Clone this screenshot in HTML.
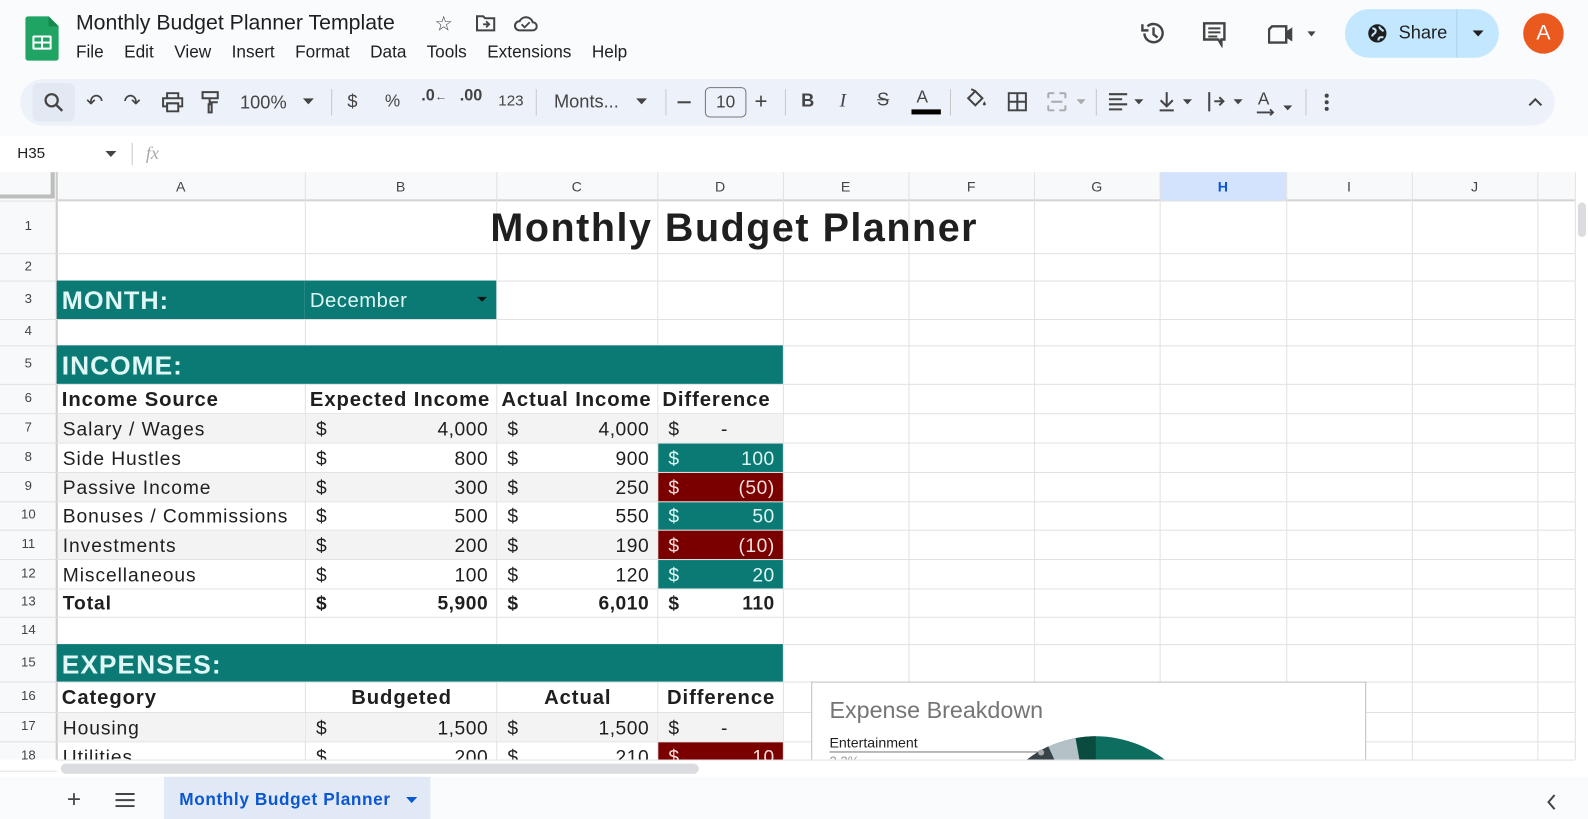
<!DOCTYPE html>
<html style="overflow:hidden"><head><meta charset="utf-8"><style>
*{box-sizing:border-box;margin:0;padding:0}
html,body{width:1588px;height:819px;overflow:hidden;background:#f9fbfd}
body{font-family:"Liberation Sans",sans-serif;color:#1f1f1f}
#w{position:absolute;left:0;top:0;width:1568px;height:809px;transform:scale(1.01276);transform-origin:0 0;overflow:hidden}
.a{position:absolute}
.t{position:absolute;white-space:nowrap}
.c{position:absolute;display:flex;align-items:center;white-space:nowrap;overflow:hidden;font-size:19px;padding:0 5px;letter-spacing:0.5px}
.teal{background:#0b7a75;color:#dff7f5}
.red{background:#7a0000;color:#f5dede}
.b{font-weight:bold}
.gl{position:absolute;background:#e1e1e1}
</style></head><body><div id="w">
<svg class="a" style="left:25px;top:16px" width="33" height="44" viewBox="0 0 33 44"><path d="M3 0h20l10 10v31a3 3 0 0 1-3 3H3a3 3 0 0 1-3-3V3a3 3 0 0 1 3-3z" fill="#1fa463"/><path d="M23 0v10h10z" fill="#138a4b"/><rect x="7" y="19" width="19" height="14" rx="1.5" fill="#fff"/><rect x="9" y="21" width="6.5" height="4" fill="#1fa463"/><rect x="17.5" y="21" width="6.5" height="4" fill="#1fa463"/><rect x="9" y="27" width="6.5" height="4" fill="#1fa463"/><rect x="17.5" y="27" width="6.5" height="4" fill="#1fa463"/></svg>
<div class="t" style="left:75px;top:11px;font-size:21px">Monthly Budget Planner Template</div>
<div class="t" style="left:429px;top:11px;font-size:20px;color:#444">☆</div>
<svg class="a" style="left:469px;top:14px" width="22" height="18" viewBox="0 0 22 18"><path d="M2 2h6l2 2h9v12H2z" fill="none" stroke="#444" stroke-width="2"/><path d="M8 10h6M11 7l3 3-3 3" fill="none" stroke="#444" stroke-width="1.8"/></svg>
<svg class="a" style="left:507px;top:14px" width="24" height="18" viewBox="0 0 24 18"><path d="M6 16h13a4 4 0 0 0 0-8 7 7 0 0 0-13-1 4.5 4.5 0 0 0 0 9z" fill="none" stroke="#444" stroke-width="2"/><path d="M8 10l3 3 5-5" fill="none" stroke="#444" stroke-width="1.8"/></svg>
<div class="t" style="left:75px;top:42px;font-size:17px;word-spacing:2px">File&nbsp;&nbsp; Edit&nbsp;&nbsp; View&nbsp;&nbsp; Insert&nbsp;&nbsp; Format&nbsp;&nbsp; Data&nbsp;&nbsp; Tools&nbsp;&nbsp; Extensions&nbsp;&nbsp; Help</div>
<svg class="a" style="left:1125px;top:19px" width="28" height="28" viewBox="0 0 28 28"><path d="M5 14a9 9 0 1 0 3-7" fill="none" stroke="#444" stroke-width="2.4"/><path d="M3 5v6h6" fill="none" stroke="#444" stroke-width="2.4"/><path d="M14 8v7l4 3" fill="none" stroke="#444" stroke-width="2.4"/></svg>
<svg class="a" style="left:1187px;top:21px" width="26" height="26" viewBox="0 0 26 26"><path d="M2 2h20v16h-3v5l-3-5H2z" fill="none" stroke="#444" stroke-width="2.4"/><path d="M6 7h12M6 11h12M6 15h9" stroke="#444" stroke-width="2"/></svg>
<svg class="a" style="left:1252px;top:22px" width="50" height="24" viewBox="0 0 50 24"><path d="M4 4h14v16H1V7z" fill="none" stroke="#444" stroke-width="2.4"/><path d="M18 9l6-4v14l-6-4z" fill="#444"/><path d="M39 9h8l-4 5z" fill="#444"/></svg>
<div class="a" style="left:1328px;top:9px;width:152px;height:48px;background:#c2e7ff;border-radius:24px"></div>
<div class="a" style="left:1438px;top:9px;width:1px;height:48px;background:#a8d4f0"></div>
<svg class="a" style="left:1350px;top:23px" width="20" height="20" viewBox="0 0 20 20"><circle cx="10" cy="10" r="9" fill="#1f1f1f"/><path d="M5 5c3 0 4 2 3 4s-3 1-3 4M12 3c0 3 3 3 4 5M11 17c0-3 2-4 5-3" stroke="#c2e7ff" stroke-width="2" fill="none"/></svg>
<div class="t" style="left:1381px;top:22px;font-size:18px;color:#1f1f1f">Share</div>
<svg class="a" style="left:1454px;top:30px" width="12" height="7"><path d="M0 0h11L5.5 6z" fill="#1f1f1f"/></svg>
<div class="a" style="left:1504px;top:13px;width:40px;height:40px;border-radius:50%;background:#ea5a1f;color:#fff;font-size:21px;text-align:center;line-height:40px">A</div>
<div class="a" style="left:20px;top:78px;width:1515px;height:46px;background:#edf2fa;border-radius:23px"></div>
<div class="a" style="left:32px;top:82px;width:42px;height:38px;background:#e3e9f2;border-radius:6px"></div>
<svg class="a" style="left:43px;top:91px" width="20" height="20" viewBox="0 0 20 20"><circle cx="8" cy="8" r="6" fill="none" stroke="#444" stroke-width="2.2"/><path d="M12.5 12.5l6 6" stroke="#444" stroke-width="2.4"/></svg>
<div class="t" style="left:85px;top:88px;font-size:20px;color:#444">↶</div>
<div class="t" style="left:122px;top:88px;font-size:20px;color:#444">↷</div>
<svg class="a" style="left:160px;top:91px" width="21" height="20" viewBox="0 0 21 20"><path d="M5 6V1h11v5M5 14H1V6h19v8h-4M5 11h11v8H5z" fill="none" stroke="#444" stroke-width="2"/></svg>
<svg class="a" style="left:198px;top:89px" width="20" height="24" viewBox="0 0 20 24"><path d="M2 2h15v6H2zM9 8v4h8M8 14h3v8H8z" fill="none" stroke="#444" stroke-width="2"/></svg>
<div class="t" style="left:237px;top:91px;font-size:18px;color:#444">100%</div>
<svg class="a" style="left:299px;top:97px" width="11" height="6"><path d="M0 0h11L5.5 6z" fill="#444"/></svg>
<div class="a" style="left:327px;top:88px;width:1px;height:26px;background:#c7c7c7"></div>
<div class="t" style="left:343px;top:90px;font-size:18px;color:#444">$</div>
<div class="t" style="left:380px;top:90px;font-size:17px;color:#444">%</div>
<div class="t" style="left:416px;top:86px;font-size:16px;color:#444;font-weight:bold">.0<span style="font-size:12px">←</span></div>
<div class="t" style="left:454px;top:86px;font-size:16px;color:#444;font-weight:bold">.00</div>
<div class="t" style="left:492px;top:91px;font-size:15px;color:#444">123</div>
<div class="a" style="left:529px;top:88px;width:1px;height:26px;background:#c7c7c7"></div>
<div class="t" style="left:547px;top:90px;font-size:18px;color:#444">Monts...</div>
<svg class="a" style="left:628px;top:97px" width="11" height="6"><path d="M0 0h11L5.5 6z" fill="#444"/></svg>
<div class="a" style="left:657px;top:88px;width:1px;height:26px;background:#c7c7c7"></div>
<div class="a" style="left:669px;top:100px;width:13px;height:2px;background:#444"></div>
<div class="a" style="left:696px;top:86px;width:41px;height:30px;border:1px solid #757575;border-radius:5px;text-align:center;line-height:28px;font-size:17px;color:#444">10</div>
<div class="t" style="left:745px;top:87px;font-size:22px;color:#444">+</div>
<div class="a" style="left:775px;top:88px;width:1px;height:26px;background:#c7c7c7"></div>
<div class="t" style="left:791px;top:89px;font-size:18px;font-weight:bold;color:#444">B</div>
<div class="t" style="left:829px;top:89px;font-size:19px;font-style:italic;font-family:'Liberation Serif';color:#444">I</div>
<div class="t" style="left:866px;top:88px;font-size:18px;color:#444;text-decoration:line-through">S</div>
<div class="t" style="left:905px;top:86px;font-size:17px;color:#444">A</div>
<div class="a" style="left:900px;top:108px;width:29px;height:5px;background:#000"></div>
<div class="a" style="left:938px;top:88px;width:1px;height:26px;background:#c7c7c7"></div>
<svg class="a" style="left:953px;top:87px" width="22" height="20" viewBox="0 0 22 20"><path d="M3 10l7-7 7 7-7 7z" fill="none" stroke="#444" stroke-width="2"/><path d="M6 1l4 2" stroke="#444" stroke-width="2"/><path d="M19 13c-2 3-2 4 0 4s2-1 0-4z" fill="#444"/></svg>
<svg class="a" style="left:995px;top:91px" width="19" height="19" viewBox="0 0 19 19"><path d="M1 1h17v17H1zM9.5 1v17M1 9.5h17" fill="none" stroke="#444" stroke-width="2"/></svg>
<svg class="a" style="left:1034px;top:91px" width="40" height="19" viewBox="0 0 40 19"><path d="M1 1h6M1 18h6M12 1h6M12 18h6M1 1v5M1 13v5M18 1v5M18 13v5M4 9.5h11" fill="none" stroke="#aaa" stroke-width="2"/><path d="M29 7h9l-4.5 5z" fill="#aaa"/></svg>
<div class="a" style="left:1082px;top:88px;width:1px;height:26px;background:#c7c7c7"></div>
<svg class="a" style="left:1094px;top:91px" width="38" height="19" viewBox="0 0 38 19"><path d="M1 2h18M1 7h13M1 12h18M1 17h13" stroke="#444" stroke-width="2"/><path d="M26 7h9l-4.5 5z" fill="#444"/></svg>
<svg class="a" style="left:1143px;top:90px" width="38" height="21" viewBox="0 0 38 21"><path d="M9 1v13M3 9l6 6 6-6M2 19h14" fill="none" stroke="#444" stroke-width="2"/><path d="M25 8h9l-4.5 5z" fill="#444"/></svg>
<svg class="a" style="left:1192px;top:90px" width="38" height="21" viewBox="0 0 38 21"><path d="M2 1v19M7 10h9M12 6l4 4-4 4" fill="none" stroke="#444" stroke-width="2"/><path d="M26 8h9l-4.5 5z" fill="#444"/></svg>
<div class="t" style="left:1242px;top:88px;font-size:17px;color:#444">A</div>
<svg class="a" style="left:1240px;top:104px" width="40" height="10" viewBox="0 0 40 10"><path d="M1 7h16M14 4l3 3-3 3" fill="none" stroke="#444" stroke-width="1.8"/><path d="M27 0h9l-4.5 5z" fill="#444"/></svg>
<div class="a" style="left:1289px;top:88px;width:1px;height:26px;background:#c7c7c7"></div>
<svg class="a" style="left:1307px;top:92px" width="6" height="18"><circle cx="3" cy="2.5" r="2" fill="#444"/><circle cx="3" cy="9" r="2" fill="#444"/><circle cx="3" cy="15.5" r="2" fill="#444"/></svg>
<svg class="a" style="left:1509px;top:96px" width="14" height="9"><path d="M1 8l6-6 6 6" fill="none" stroke="#444" stroke-width="2"/></svg>
<div class="a" style="left:0;top:134px;width:1568px;height:36px;background:#fff"></div>
<div class="t" style="left:17px;top:143px;font-size:15px">H35</div>
<svg class="a" style="left:104px;top:149px" width="11" height="6"><path d="M0 0h11L5.5 6z" fill="#444"/></svg>
<div class="a" style="left:130px;top:141px;width:1px;height:22px;background:#c7c7c7"></div>
<div class="t" style="left:144px;top:141px;font-size:18px;font-style:italic;font-family:'Liberation Serif';color:#aaa">fx</div>
<div class="a" style="left:0;top:170px;width:1568px;height:597px;background:#fff"></div>
<div class="a" style="left:0;top:170px;width:1555px;height:28px;background:#f8f9fa;border-bottom:1px solid #c7c7c7"></div>
<div class="a" style="left:0;top:170px;width:56px;height:580px;background:#f8f9fa;border-right:1px solid #c7c7c7"></div>
<div class="a" style="left:0;top:170px;width:54px;height:26px;background:#f8f9fa;border-right:4px solid #bdbdbd;border-bottom:4px solid #bdbdbd"></div>
<div class="a" style="left:1145px;top:170px;width:125px;height:28px;background:#d3e3fd"></div>
<div id="g"></div>
<div class="c teal b" style="left:56px;top:277px;width:245px;height:38px;font-size:25px;letter-spacing:1px;padding-top:3px">MONTH:</div>
<div class="c teal" style="left:301px;top:277px;width:189px;height:38px;font-size:20px;padding-top:2px">December<svg style="position:absolute;left:170px;top:16px" width="10" height="5"><path d="M0 0h10L5 5z" fill="#111"/></svg></div>
<div class="c teal b" style="left:56px;top:341px;width:717px;height:38px;font-size:26px;letter-spacing:1px;padding-top:3px">INCOME:</div>
<div class="c teal b" style="left:56px;top:636px;width:717px;height:37px;font-size:26px;letter-spacing:1px;padding-top:3px">EXPENSES:</div>
<div class="c" style="left:56px;top:198px;width:1338px;height:52px;justify-content:center;font-size:39px;font-weight:bold;letter-spacing:1.5px;padding-top:4px">Monthly Budget Planner</div>
<div id="rows"></div>
<div class="a" style="left:801px;top:673px;width:548px;height:77px;background:#fff;border:1px solid #bdbdbd;border-bottom:none;overflow:hidden">
<div class="t" style="left:17px;top:14px;font-size:23px;color:#757575">Expense Breakdown</div>
<div class="t" style="left:17px;top:51px;font-size:14px;color:#222">Entertainment</div>
<div class="t" style="left:17px;top:70px;font-size:13px;color:#999">3.2%</div>
<div class="a" style="left:17px;top:68px;width:210px;height:1px;background:#777"></div>
<svg class="a" style="left:160px;top:50px" width="240" height="40" viewBox="0 0 240 40"><circle cx="120" cy="115" r="112" fill="#0d6e5f"/><path d="M120 115L100 5A112 112 0 0 1 120 3z" fill="#0a4b40"/><path d="M120 115L73 13A112 112 0 0 1 100 5z" fill="#b4c2c7"/><path d="M120 115L43 34A112 112 0 0 1 73 13z" fill="#39434a"/><circle cx="66" cy="19" r="3" fill="#aaa"/></svg>
</div>
<div class="a" style="left:56px;top:750px;width:1499px;height:17px;background:#fff;border-top:1px solid #e1e1e1"></div>
<div class="a" style="left:60px;top:754px;width:630px;height:10px;background:#dadce0;border-radius:5px"></div>
<div class="a" style="left:1555px;top:198px;width:13px;height:552px;background:#fff;border-left:1px solid #e1e1e1"></div>
<div class="a" style="left:1558px;top:200px;width:8px;height:34px;background:#dadce0;border-radius:4px"></div>
<div class="a" style="left:0;top:767px;width:1568px;height:42px;background:#f9fbfd"></div>
<div class="t" style="left:66px;top:776px;font-size:24px;color:#444">+</div>
<svg class="a" style="left:114px;top:783px" width="19" height="14"><path d="M0 1h19M0 7h19M0 13h19" stroke="#444" stroke-width="2"/></svg>
<div class="a" style="left:162px;top:767px;width:263px;height:42px;background:#e1e9f7"></div>
<div class="t" style="left:177px;top:780px;font-size:17px;font-weight:bold;color:#0b57d0;letter-spacing:0.6px">Monthly Budget Planner</div>
<svg class="a" style="left:401px;top:787px" width="11" height="6"><path d="M0 0h11L5.5 6z" fill="#0b57d0"/></svg>
<svg class="a" style="left:1527px;top:784px" width="10" height="16"><path d="M8 1L2 8l6 7" fill="none" stroke="#444" stroke-width="2"/></svg>
</div>
<script>
var X=[56,301,490,649,773,897,1021,1145,1270,1394,1518,1555];
var Y=[198,250,277,315,341,379,408,437,466,495,523,552,581,609,636,673,703,732,761];
var L=["A","B","C","D","E","F","G","H","I","J"];
var h="";
for(var i=0;i<X.length;i++){h+='<div class="gl" style="left:'+X[i]+'px;top:170px;width:1px;height:580px'+(i>0?'':';background:#c7c7c7')+'"></div>';}
for(var j=0;j<Y.length;j++){h+='<div class="gl" style="left:0;top:'+Y[j]+'px;width:1555px;height:1px"></div>';}
for(var i=0;i<10;i++){h+='<div class="t" style="left:'+X[i]+'px;width:'+(X[i+1]-X[i])+'px;top:176px;text-align:center;font-size:14px;color:'+(i==7?'#0b57d0;font-weight:bold':'#444')+'">'+L[i]+'</div>';}
for(var j=0;j<18;j++){h+='<div class="t" style="left:0;width:56px;top:'+((Y[j]+Y[j+1])/2-9)+'px;text-align:center;font-size:13px;color:#444">'+(j+1)+'</div>';}
document.getElementById("g").innerHTML=h;
function R(r){return [Y[r-1],Y[r]-Y[r-1]];}
var rows=[
[6,"Income Source","Expected Income","Actual Income","Difference","hdr"],
[7,"Salary / Wages","4,000","4,000","-",""],
[8,"Side Hustles","800","900","100","teal"],
[9,"Passive Income","300","250","(50)","red"],
[10,"Bonuses / Commissions","500","550","50","teal"],
[11,"Investments","200","190","(10)","red"],
[12,"Miscellaneous","100","120","20","teal"],
[13,"Total","5,900","6,010","110","tot"],
[16,"Category","Budgeted","Actual","Difference","hdr2"],
[17,"Housing","1,500","1,500","-",""],
[18,"Utilities","200","210","10","red"]];
var o="";
rows.forEach(function(r){var y=R(r[0]),t=y[0],hh=y[1];var k=r[5];
 var zebra=(r[0]==7||r[0]==9||r[0]==11||r[0]==17)?"background:#f3f3f3;":"";
 if(k=="hdr"||k=="hdr2"){
  for(var i=0;i<4;i++){var jc=(k=="hdr2"&&i>0)?"justify-content:center;":"";
   o+='<div class="c b" style="left:'+(X[i]+1)+'px;top:'+(t+1)+'px;width:'+(X[i+1]-X[i]-1)+'px;height:'+(hh-1)+'px;font-size:20px;padding:2px 3px 0 4px;letter-spacing:0.9px;'+jc+'">'+r[i+1]+'</div>';}
  return;}
 var bd=k=="tot"?"font-weight:bold;":"";
 o+='<div class="c" style="left:'+(X[0]+1)+'px;top:'+(t+1)+'px;width:244px;height:'+(hh-1)+'px;padding-top:3px;letter-spacing:0.9px;'+zebra+bd+'">'+r[1]+'</div>';
 for(var i=1;i<4;i++){var cls="c",st=zebra;
  if(i==3&&(k=="teal"||k=="red")){cls+=" "+k;st="";}
  o+='<div class="'+cls+'" style="left:'+(X[i]+1)+'px;top:'+(t+1)+'px;width:'+(X[i+1]-X[i]-1)+'px;height:'+(hh-1)+'px;justify-content:space-between;padding:3px 8px 0 10px;'+st+bd+'"><span>$</span><span>'+r[i+1]+(r[i+1]=="-"?"&nbsp;&nbsp;&nbsp;&nbsp;&nbsp;&nbsp;&nbsp;&nbsp;":"")+'</span></div>';}
});
document.getElementById("rows").innerHTML=o;
</script>
</body></html>
